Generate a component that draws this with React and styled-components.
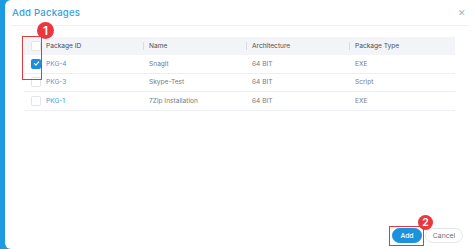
import React from 'react'
import styled, { createGlobalStyle } from 'styled-components'

const GlobalStyle = createGlobalStyle`
  * { box-sizing: border-box; }
  html, body { margin: 0; padding: 0; }
  body {
    font-family: Inter, "Noto Sans", sans-serif;
    background: #1d9be0;
  }
`

const Frame = styled.div`
  width: 474px;
  height: 249px;
  padding-left: 5px;
  background: #1d9be0;
  overflow: hidden;
`

const Modal = styled.div`
  position: relative;
  height: 100%;
  background: #fff;
  border-radius: 6px 0 0 6px;
  display: flex;
  flex-direction: column;
`

const Header = styled.div`
  height: 26px;
  margin: 0 6px 0 6px;
  display: flex;
  align-items: center;
  justify-content: space-between;
  border-bottom: 1px solid #eef0f3;
`

const Title = styled.h1`
  margin: 0 0 0 1px;
  font-size: 9.6px;
  font-weight: 500;
  color: #349fdc;
  letter-spacing: 0.2px;
`

const Close = styled.span`
  width: 10px;
  display: flex;
  justify-content: center;
  color: #a8adb4;
  font-size: 9px;
  margin-right: 1px;
`

const Body = styled.div`
  flex: 1;
  padding: 11px 19px 0 19px;
`

const Table = styled.div`
  width: 100%;
`

const Row = styled.div`
  display: grid;
  grid-template-columns: 19px 100px 103px 103px 1fr;
  height: ${p => (p.head ? '18px' : '18.5px')};
  align-items: center;
  background: ${p => (p.head ? '#f2f4f7' : '#fff')};
  border-bottom: ${p => (p.head ? 'none' : '1px solid #eceef2')};
`

const Cell = styled.div`
  position: relative;
  height: 100%;
  display: flex;
  align-items: center;
  padding-left: ${p => (p.first ? '3px' : p.tight ? '3px' : '6px')};
  font-size: 6.6px;
  color: ${p => (p.link ? '#3a9bdc' : p.head ? '#4a4f57' : '#777c83')};
  white-space: nowrap;

  &::before {
    content: '';
    display: ${p => (p.sep ? 'block' : 'none')};
    position: absolute;
    left: 0;
    top: 5px;
    bottom: 5px;
    width: 1px;
    background: #d9dde3;
  }
`

const Box = styled.span`
  width: 10px;
  height: 10px;
  margin-left: 4px;
  border-radius: 1.5px;
  border: 1px solid ${p => (p.checked ? '#1c8fdc' : '#e1e4e8')};
  background: ${p => (p.checked ? '#1c8fdc' : '#fff')};
  display: flex;
  align-items: center;
  justify-content: center;
`

const Footer = styled.div`
  display: flex;
  justify-content: flex-end;
  gap: 3px;
  padding: 0 11px 6px 0;
`

const Button = styled.button`
  height: 15px;
  padding: 0;
  width: ${p => (p.primary ? '30px' : '38px')};
  border-radius: 8px;
  border: 1px solid ${p => (p.primary ? '#1c92dc' : '#e3e6ea')};
  background: ${p => (p.primary ? '#1c92dc' : '#fff')};
  color: ${p => (p.primary ? '#fff' : '#6c7178')};
  font-family: inherit;
  font-size: 6.8px;
  font-weight: ${p => (p.primary ? 500 : 400)};
`

const Mark = styled.div`
  position: absolute;
  border: 1.5px solid #e0393e;
`

const Badge = styled.div`
  position: absolute;
  width: ${p => p.size}px;
  height: ${p => p.size}px;
  border-radius: 50%;
  background: #e8383d;
  color: #fff;
  font-size: ${p => p.size * 0.7}px;
  font-weight: 600;
  display: flex;
  align-items: center;
  justify-content: center;
`

const packages = [
  { id: 'PKG-4', name: 'Snagit', arch: '64 BIT', type: 'EXE', checked: true },
  { id: 'PKG-3', name: 'Skype-Test', arch: '64 BIT', type: 'Script' },
  { id: 'PKG-1', name: '7Zip Installation', arch: '64 BIT', type: 'EXE' },
]

function Check() {
  return (
    <svg width="7" height="7" viewBox="0 0 10 10">
      <path d="M2 5.3 L4.2 7.4 L8.2 2.8" fill="none" stroke="#fff" strokeWidth="1.6" strokeLinecap="round" strokeLinejoin="round" />
    </svg>
  )
}

export default function App() {
  return (
    <>
      <GlobalStyle />
      <Frame>
        <Modal>
          <Header>
            <Title>Add Packages</Title>
            <Close>✕</Close>
          </Header>
          <Body>
            <Table>
              <Row head>
                <Cell first><Box /></Cell>
                <Cell head tight>Package ID</Cell>
                <Cell head sep>Name</Cell>
                <Cell head sep>Architecture</Cell>
                <Cell head sep>Package Type</Cell>
              </Row>
              {packages.map(p => (
                <Row key={p.id}>
                  <Cell first><Box checked={p.checked}>{p.checked && <Check />}</Box></Cell>
                  <Cell link tight>{p.id}</Cell>
                  <Cell>{p.name}</Cell>
                  <Cell>{p.arch}</Cell>
                  <Cell>{p.type}</Cell>
                </Row>
              ))}
            </Table>
          </Body>
          <Footer>
            <Button primary>Add</Button>
            <Button>Cancel</Button>
          </Footer>
          <Mark style={{ left: 17, top: 36, width: 20, height: 44 }} />
          <Badge size={17} style={{ left: 32, top: 22 }}>1</Badge>
          <Mark style={{ left: 384, top: 226, width: 35, height: 20 }} />
          <Badge size={15} style={{ left: 413, top: 215 }}>2</Badge>
        </Modal>
      </Frame>
    </>
  )
}
